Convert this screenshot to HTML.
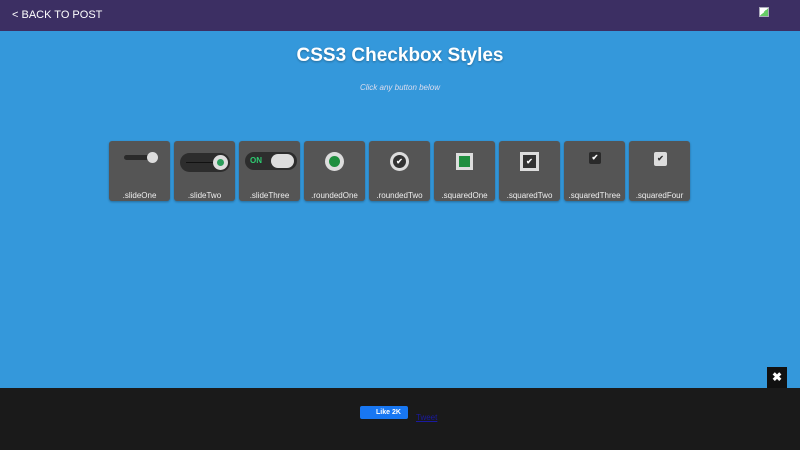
<!DOCTYPE html>
<html><head><style>
*{margin:0;padding:0;box-sizing:border-box}
body{width:800px;height:450px;overflow:hidden;background:#3498db;font-family:"Liberation Sans",sans-serif;position:relative}
.hdr{position:absolute;left:0;top:0;width:800px;height:31px;background:#3c2f63}
.hdr span{position:absolute;left:12px;top:9px;color:#fff;font-size:11px}
.img{position:absolute;left:759px;top:7px;width:10px;height:10px;border:1px solid #aab;background:linear-gradient(135deg,#fff 50%,#6c6 50%)}
h1{position:absolute;top:45px;width:800px;text-align:center;color:#fff;font-size:19px;font-family:"Liberation Sans",sans-serif;font-weight:bold;text-shadow:0 1px 2px rgba(0,0,0,.3)}
.sub{position:absolute;top:83px;width:800px;text-align:center;color:#dde;font-size:8px;font-style:italic}
.b{position:absolute;top:141px;width:61px;height:60px;background:#555;border-radius:3px;box-shadow:0 1px 2px rgba(0,0,0,.3)}
.b .l{position:absolute;top:50px;width:100%;text-align:center;color:#eee;font-size:8px}
.a{position:absolute}
.foot{position:absolute;left:0;top:388px;width:800px;height:62px;background:#1a1a1a}
.close{position:absolute;left:767px;top:367px;width:20px;height:21px;background:#111;color:#fff;font-size:12px;text-align:center;line-height:21px;font-weight:bold}
.like{position:absolute;left:360px;top:406px;width:48px;height:13px;background:#1877f2;border-radius:2px;color:#fff;font-size:7px;font-weight:bold;line-height:13px;padding-left:16px}
.tw{position:absolute;left:416px;top:413px;color:#1a1aa0;font-size:8px;text-decoration:underline}
.chk{color:#fff;font-size:8px;text-align:center;font-weight:bold}
</style></head><body>
<div class="hdr"><span>&lt; BACK TO POST</span></div><div class="img"></div>
<h1>CSS3 Checkbox Styles</h1>
<div class="sub">Click any button below</div>

<div class="b" style="left:109px"><div class="a" style="left:15px;top:14px;width:30px;height:5px;background:#2a2a2a;border-radius:3px"></div><div class="a" style="left:38px;top:11px;width:11px;height:11px;border-radius:50%;background:#ddd"></div><div class="l">.slideOne</div></div>
<div class="b" style="left:174px"><div class="a" style="left:6px;top:12px;width:50px;height:19px;background:#2d2d2d;border-radius:10px"></div><div class="a" style="left:12px;top:21px;width:30px;height:1px;background:#111"></div><div class="a" style="left:39px;top:14px;width:15px;height:15px;border-radius:50%;background:#ddd"></div><div class="a" style="left:43px;top:18px;width:7px;height:7px;border-radius:50%;background:#2a9d5a"></div><div class="l">.slideTwo</div></div>
<div class="b" style="left:239px"><div class="a" style="left:6px;top:11px;width:52px;height:18px;background:#2d2d2d;border-radius:9px"></div><div class="a" style="left:11px;top:15px;color:#2ecc71;font-size:8px;font-weight:bold">ON</div><div class="a" style="left:32px;top:13px;width:23px;height:14px;background:#ddd;border-radius:7px"></div><div class="l">.slideThree</div></div>
<div class="b" style="left:304px"><div class="a" style="left:21px;top:11px;width:19px;height:19px;border-radius:50%;background:#ddd"></div><div class="a" style="left:25px;top:15px;width:11px;height:11px;border-radius:50%;background:#1f8f3f"></div><div class="l">.roundedOne</div></div>
<div class="b" style="left:369px"><div class="a" style="left:21px;top:11px;width:19px;height:19px;border-radius:50%;background:#ddd"></div><div class="a chk" style="left:24px;top:14px;width:13px;height:13px;border-radius:50%;background:#333;line-height:13px">✔</div><div class="l">.roundedTwo</div></div>
<div class="b" style="left:434px"><div class="a" style="left:22px;top:12px;width:17px;height:17px;background:#ddd"></div><div class="a" style="left:25px;top:15px;width:11px;height:11px;background:#1f8f3f"></div><div class="l">.squaredOne</div></div>
<div class="b" style="left:499px"><div class="a" style="left:21px;top:11px;width:19px;height:19px;background:#ddd"></div><div class="a chk" style="left:24px;top:14px;width:13px;height:13px;background:#333;line-height:13px">✔</div><div class="l">.squaredTwo</div></div>
<div class="b" style="left:564px"><div class="a chk" style="left:25px;top:11px;width:12px;height:12px;background:#2a2a2a;border-radius:2px;line-height:12px">✔</div><div class="l">.squaredThree</div></div>
<div class="b" style="left:629px"><div class="a chk" style="left:25px;top:11px;width:13px;height:14px;background:#ddd;border-radius:2px;line-height:14px;color:#333">✔</div><div class="l">.squaredFour</div></div>

<div class="foot"></div>
<div class="close">✖</div>
<div class="like">Like 2K</div>
<div class="tw">Tweet</div>
</body></html>
